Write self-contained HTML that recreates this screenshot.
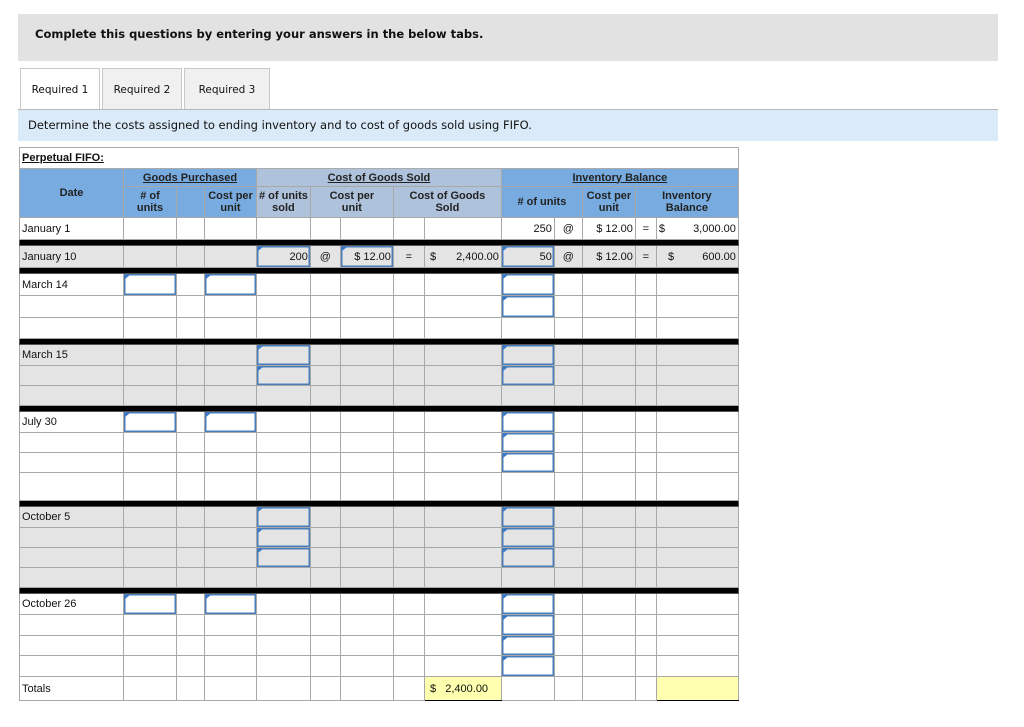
<!DOCTYPE html>
<html><head><style>
body{margin:0;background:#fff;width:1024px;height:727px;position:relative;overflow:hidden;font-family:"Liberation Sans",Arial,sans-serif;}
.hdr{position:absolute;left:18px;top:14px;width:980px;height:47px;background:#e2e2e2;}
.hdr span{position:absolute;left:17px;top:13px;font:bold 11.5px "DejaVu Sans",Verdana,sans-serif;color:#111;}
.tab{position:absolute;top:68px;height:41px;border:1px solid #c8c8c8;border-bottom:none;background:#f0f0f0;font:10.5px "DejaVu Sans",Verdana,sans-serif;color:#111;text-align:center;line-height:42px;box-sizing:border-box}
.tabline{position:absolute;left:18px;top:109px;width:980px;height:1px;background:#b8b8b8}
.inst{position:absolute;left:18px;top:110px;width:980px;height:31px;background:#daeaf8;font:11.5px "DejaVu Sans",Verdana,sans-serif;color:#111;line-height:31px;}
.inst span{padding-left:10px}
table{position:absolute;left:19px;top:147px;border-collapse:collapse;table-layout:fixed;font-size:11px;color:#111}
td{border:1px solid #a8a8a8;padding:0 2px;position:relative;white-space:nowrap;overflow:visible}
tr td:nth-child(2),tr td:nth-child(5),tr td:nth-child(10){border-left-color:#000}
tr.g td{background:#e4e4e4}
tr.s td{background:#000;height:5px;padding:0;border-color:#555}
.h1 td,.h2 td{text-align:center;font-weight:bold;font-size:11px;line-height:12px;color:#222}
.bl{background:#78ace0}.gr{background:#afc2dc}
u{text-decoration:underline}
td.i{box-shadow:inset 0 0 0 1.5px #4a7ebb;}
td.i::before{content:"";position:absolute;left:1px;top:1px;border-left:5px solid #3a78c8;border-bottom:4px solid transparent}
.r{text-align:right}.c{text-align:center}
.y{background:#ffffb0!important}
</style></head><body>
<div class="hdr"><span>Complete this questions by entering your answers in the below tabs.</span></div>
<div class="tab" style="left:20px;width:80px;background:#fff;height:42px">Required 1</div>
<div class="tab" style="left:102px;width:80px">Required 2</div>
<div class="tab" style="left:184px;width:86px">Required 3</div>
<div class="tabline"></div>
<div class="inst"><span>Determine the costs assigned to ending inventory and to cost of goods sold using FIFO.</span></div>
<table>
<colgroup><col style="width:104px"><col style="width:53px"><col style="width:28px"><col style="width:52px"><col style="width:53px"><col style="width:30px"><col style="width:53px"><col style="width:31px"><col style="width:77px"><col style="width:53px"><col style="width:28px"><col style="width:53px"><col style="width:21px"><col style="width:82px"></colgroup>
<tr style="height:21px"><td colspan="14" style="font-weight:bold;border-color:#aaa"><u>Perpetual FIFO:</u></td></tr>
<tr class="h1" style="height:18px"><td class="bl" rowspan="2">Date</td><td class="bl" colspan="3" style="border-left-color:#000"><u>Goods Purchased</u></td><td class="gr" colspan="5" style="border-left-color:#000"><u>Cost of Goods Sold</u></td><td class="bl" colspan="5" style="border-left-color:#000"><u>Inventory Balance</u></td></tr>
<tr class="h2" style="height:31px"><td class="bl" style="border-left-color:#000"># of<br>units</td><td class="bl" style="border-left-color:#a8a8a8"></td><td class="bl">Cost per<br>unit</td><td class="gr" style="border-left-color:#000"># of units<br>sold</td><td class="gr" colspan="2">Cost per<br>unit</td><td class="gr" colspan="2">Cost of Goods<br>Sold</td><td class="bl" colspan="2" style="border-left-color:#000"># of units</td><td class="bl">Cost per<br>unit</td><td class="bl" colspan="2">Inventory<br>Balance</td></tr>
<tr style="height:22px"><td>January 1</td><td></td><td></td><td></td><td></td><td></td><td></td><td></td><td></td><td class="r">250</td><td class="c">@</td><td class="r">$ 12.00</td><td class="c">=</td><td>$<span style="float:right">3,000.00</span></td></tr>
<tr class="s"><td colspan="14"></td></tr>
<tr class="g" style="height:22px"><td>January 10</td><td></td><td></td><td></td><td class="i r">200</td><td class="c">@</td><td class="i r">$ 12.00</td><td class="c">=</td><td>&nbsp;$<span style="float:right">2,400.00</span></td><td class="i r">50</td><td class="c">@</td><td class="r">$ 12.00</td><td class="c">=</td><td>&nbsp;&nbsp;&nbsp;$<span style="float:right">600.00</span></td></tr>
<tr class="s"><td colspan="14"></td></tr>
<tr style="height:22px"><td>March 14</td><td class="i"></td><td></td><td class="i"></td><td></td><td></td><td></td><td></td><td></td><td class="i"></td><td></td><td></td><td></td><td></td></tr>
<tr style="height:22px"><td></td><td></td><td></td><td></td><td></td><td></td><td></td><td></td><td></td><td class="i"></td><td></td><td></td><td></td><td></td></tr>
<tr style="height:21px"><td></td><td></td><td></td><td></td><td></td><td></td><td></td><td></td><td></td><td></td><td></td><td></td><td></td><td></td></tr>
<tr class="s"><td colspan="14"></td></tr>
<tr class="g" style="height:21px"><td>March 15</td><td></td><td></td><td></td><td class="i"></td><td></td><td></td><td></td><td></td><td class="i"></td><td></td><td></td><td></td><td></td></tr>
<tr class="g" style="height:20px"><td></td><td></td><td></td><td></td><td class="i"></td><td></td><td></td><td></td><td></td><td class="i"></td><td></td><td></td><td></td><td></td></tr>
<tr class="g" style="height:20px"><td></td><td></td><td></td><td></td><td></td><td></td><td></td><td></td><td style="border-top-color:#000"></td><td></td><td></td><td></td><td></td><td></td></tr>
<tr class="s"><td colspan="14"></td></tr>
<tr style="height:21px"><td>July 30</td><td class="i"></td><td></td><td class="i"></td><td></td><td></td><td></td><td></td><td></td><td class="i"></td><td></td><td></td><td></td><td></td></tr>
<tr style="height:20px"><td></td><td></td><td></td><td></td><td></td><td></td><td></td><td></td><td></td><td class="i"></td><td></td><td></td><td></td><td></td></tr>
<tr style="height:20px"><td></td><td></td><td></td><td></td><td></td><td></td><td></td><td></td><td></td><td class="i"></td><td></td><td></td><td></td><td></td></tr>
<tr style="height:28px"><td></td><td></td><td></td><td></td><td></td><td></td><td></td><td></td><td></td><td></td><td></td><td></td><td></td><td style="border-top-color:#000"></td></tr>
<tr class="s"><td colspan="14"></td></tr>
<tr class="g" style="height:21px"><td>October 5</td><td></td><td></td><td></td><td class="i"></td><td></td><td></td><td></td><td></td><td class="i"></td><td></td><td></td><td></td><td></td></tr>
<tr class="g" style="height:20px"><td></td><td></td><td></td><td></td><td class="i"></td><td></td><td></td><td></td><td></td><td class="i"></td><td></td><td></td><td></td><td></td></tr>
<tr class="g" style="height:20px"><td></td><td></td><td></td><td></td><td class="i"></td><td></td><td></td><td></td><td></td><td class="i"></td><td></td><td></td><td></td><td></td></tr>
<tr class="g" style="height:20px"><td></td><td></td><td></td><td></td><td></td><td></td><td></td><td></td><td style="border-top-color:#000"></td><td></td><td></td><td></td><td></td><td style="border-top-color:#000"></td></tr>
<tr class="s"><td colspan="14"></td></tr>
<tr style="height:21px"><td>October 26</td><td class="i"></td><td></td><td class="i"></td><td></td><td></td><td></td><td></td><td></td><td class="i"></td><td></td><td></td><td></td><td></td></tr>
<tr style="height:21px"><td></td><td></td><td></td><td></td><td></td><td></td><td></td><td></td><td></td><td class="i"></td><td></td><td></td><td></td><td></td></tr>
<tr style="height:20px"><td></td><td></td><td></td><td></td><td></td><td></td><td></td><td></td><td></td><td class="i"></td><td></td><td></td><td></td><td></td></tr>
<tr style="height:21px"><td></td><td></td><td></td><td></td><td></td><td></td><td></td><td></td><td></td><td class="i"></td><td></td><td></td><td></td><td></td></tr>
<tr style="height:24px"><td>Totals</td><td></td><td></td><td></td><td></td><td></td><td></td><td></td><td class="y" style="border-bottom-color:#000">&nbsp;$&nbsp;&nbsp;&nbsp;2,400.00</td><td></td><td></td><td></td><td></td><td class="y" style="border-bottom-color:#000"></td></tr>
</table>
</body></html>
